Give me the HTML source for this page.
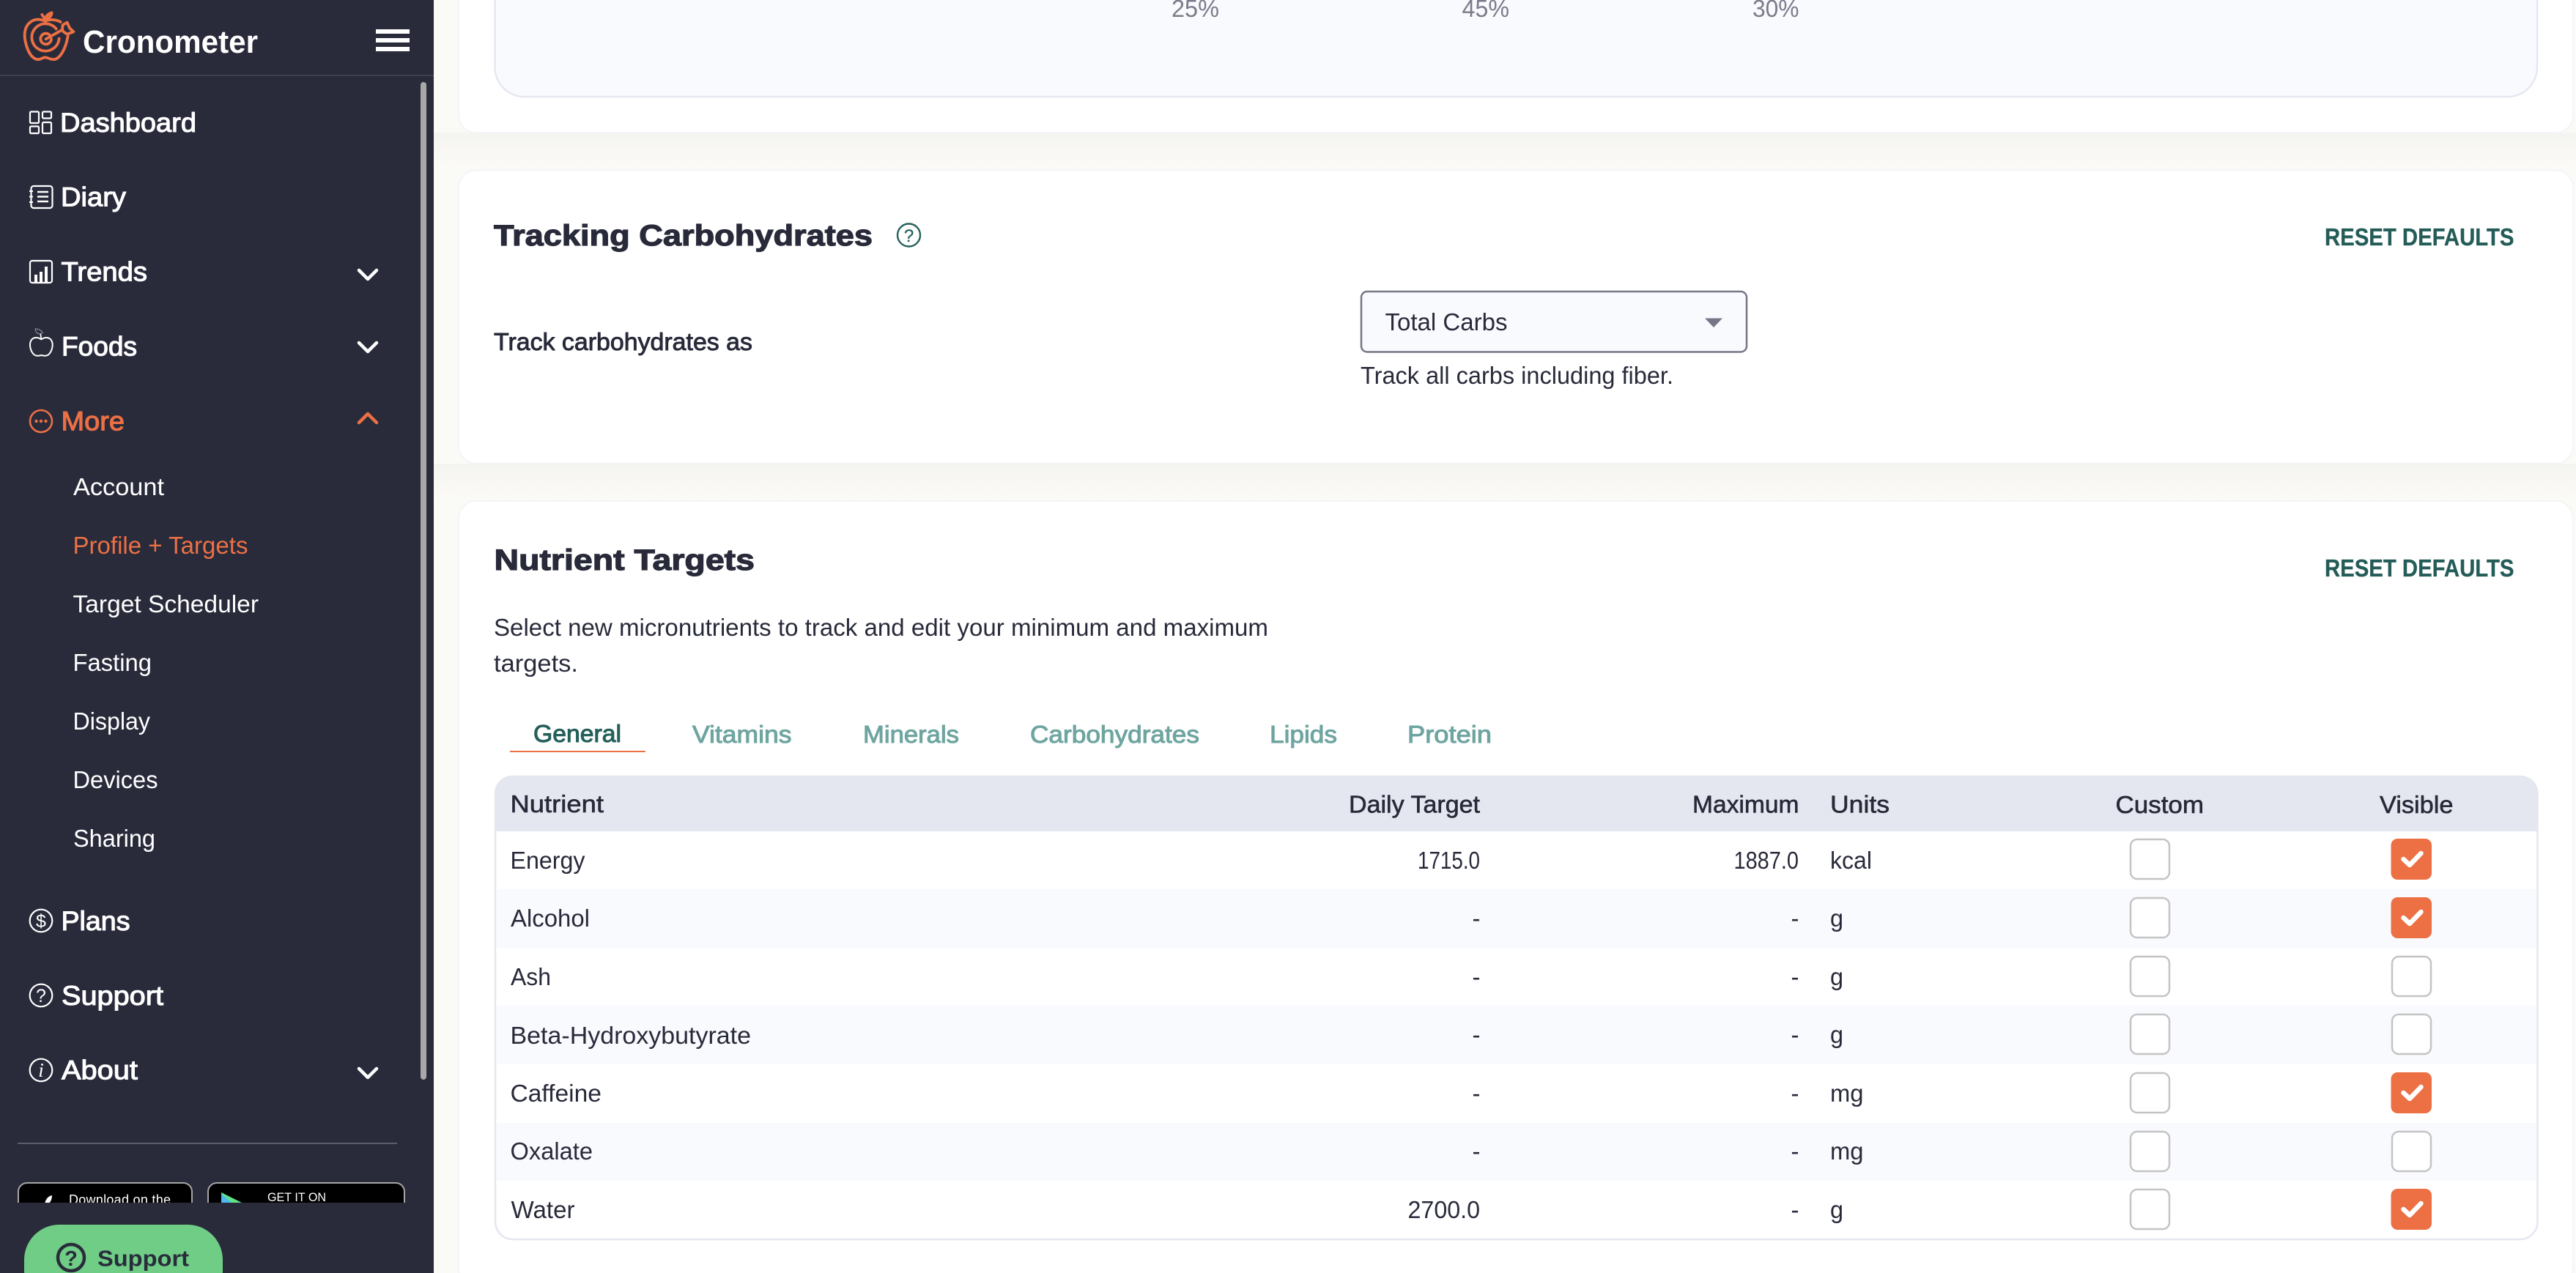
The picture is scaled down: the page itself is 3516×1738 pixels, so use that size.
<!DOCTYPE html>
<html lang="en"><head><meta charset="utf-8"><title>Cronometer - Profile + Targets</title>
<style>
html,body{margin:0;padding:0;background:#fafaf6;width:3516px;height:1738px;overflow:hidden}
svg{display:block}
text{font-family:"Liberation Sans",sans-serif;white-space:pre}
.nav{font-size:37px;fill:#fff;stroke:#fff;stroke-width:1.1}
.sub{font-size:33px;fill:#fff}
.b{font-size:33px;fill:#282a3a}
.m{font-size:33px;fill:#282a3a;stroke:#282a3a;stroke-width:.6}
.h{font-size:40px;font-weight:700;fill:#282a3a;stroke:#282a3a;stroke-width:1.2}
.r{font-size:33px;font-weight:700;fill:#245c58;stroke:#245c58;stroke-width:.3}
.tab{font-size:33px;fill:#6ea5a0;stroke:#6ea5a0;stroke-width:1}
.p{font-size:33px;fill:#7a7c89}
</style></head><body>
<svg xmlns="http://www.w3.org/2000/svg" width="3516" height="1738" viewBox="0 0 3516 1738">
<defs>
<linearGradient id="g" x1="0" y1="0" x2="0" y2="1"><stop offset="0" stop-color="#f4f4f0"/><stop offset=".6" stop-color="#f9f8f4"/><stop offset="1" stop-color="#fafaf6"/></linearGradient>
<clipPath id="tc"><rect x="675" y="1059" width="2789.5" height="634" rx="24"/></clipPath>
<clipPath id="bc"><rect x="0" y="1600" width="592" height="42"/></clipPath>
<g id="chk"><path d="M0 8 L8.5 16 L24 0" fill="none" stroke="#fff" stroke-width="6.5" stroke-linecap="round" stroke-linejoin="round"/></g>
</defs>

<!-- main background -->
<rect width="3516" height="1738" fill="#fafaf6"/>
<rect x="592" y="181" width="2924" height="51" fill="url(#g)"/>
<rect x="592" y="633" width="2924" height="51" fill="url(#g)"/>

<!-- card 1 -->
<rect x="626" y="-60" width="2886" height="241" rx="24" fill="#fff" stroke="#f4f5f8" stroke-width="2"/>
<rect x="675.5" y="-60" width="2787.5" height="192" rx="40" fill="#f9fafe" stroke="#e5e8f0" stroke-width="2.5"/>
<text x="1599" y="23" class="p" textLength="65" lengthAdjust="spacingAndGlyphs">25%</text>
<text x="1995.5" y="23" class="p" textLength="64.5" lengthAdjust="spacingAndGlyphs">45%</text>
<text x="2392" y="23" class="p" textLength="63.5" lengthAdjust="spacingAndGlyphs">30%</text>

<!-- card 2 -->
<rect x="626" y="232.5" width="2886" height="400" rx="24" fill="#fff" stroke="#f4f5f8" stroke-width="2"/>
<text x="674" y="335" class="h" textLength="517" lengthAdjust="spacingAndGlyphs">Tracking Carbohydrates</text>
<ellipse cx="1240.5" cy="321" rx="15.5" ry="15.5" fill="none" stroke="#24605a" stroke-width="2.4"/>
<text x="1240.5" y="330" font-size="24" text-anchor="middle" fill="#24605a" stroke="#24605a" stroke-width=".3">?</text>
<text x="3173" y="335" class="r" textLength="258.5" lengthAdjust="spacingAndGlyphs">RESET DEFAULTS</text>
<text x="674" y="478" class="m" textLength="353" lengthAdjust="spacingAndGlyphs" style="stroke-width:.9">Track carbohydrates as</text>
<rect x="1858" y="398" width="526" height="82.5" rx="8" fill="#f9fafe" stroke="#757785" stroke-width="2.5"/>
<text x="1890.5" y="451" class="b" textLength="167" lengthAdjust="spacingAndGlyphs">Total Carbs</text>
<path d="M2327 434.5H2351L2339 447Z" fill="#757785"/>
<text x="1857" y="524" class="b" textLength="427" lengthAdjust="spacingAndGlyphs">Track all carbs including fiber.</text>

<!-- card 3 -->
<rect x="626" y="684" width="2886" height="1071" rx="24" fill="#fff" stroke="#f4f5f8" stroke-width="2"/>
<text x="674.5" y="778" class="h" textLength="355.5" lengthAdjust="spacingAndGlyphs">Nutrient Targets</text>
<text x="3173" y="787" class="r" textLength="258.5" lengthAdjust="spacingAndGlyphs">RESET DEFAULTS</text>
<text x="674" y="868" class="b" textLength="1057" lengthAdjust="spacingAndGlyphs">Select new micronutrients to track and edit your minimum and maximum</text>
<text x="674" y="917" class="b" textLength="115" lengthAdjust="spacingAndGlyphs">targets.</text>

<text x="728" y="1013" class="tab" textLength="120" lengthAdjust="spacingAndGlyphs" style="fill:#24605a;stroke:#24605a">General</text>
<rect x="696" y="1025" width="185" height="2" fill="#ec7044"/>
<text x="945" y="1014" class="tab" textLength="135.5" lengthAdjust="spacingAndGlyphs">Vitamins</text>
<text x="1178" y="1014" class="tab" textLength="131" lengthAdjust="spacingAndGlyphs">Minerals</text>
<text x="1406" y="1014" class="tab" textLength="231" lengthAdjust="spacingAndGlyphs">Carbohydrates</text>
<text x="1733" y="1014" class="tab" textLength="92" lengthAdjust="spacingAndGlyphs">Lipids</text>
<text x="1921" y="1014" class="tab" textLength="115" lengthAdjust="spacingAndGlyphs">Protein</text>

<!-- table -->
<g clip-path="url(#tc)">
<rect x="675" y="1059" width="2790" height="634" fill="#fff"/>
<rect x="675" y="1059" width="2790" height="76" fill="#e4e7ef"/>
<rect x="675" y="1214" width="2790" height="80" fill="#f9fafe"/>
<rect x="675" y="1373" width="2790" height="80" fill="#f9fafe"/>
<rect x="675" y="1533" width="2790" height="79" fill="#f9fafe"/>
</g>
<rect x="676" y="1060" width="2787.5" height="632" rx="24" fill="none" stroke="#e4e7ef" stroke-width="2.5"/>

<text x="696.5" y="1109" class="m" textLength="127.5" lengthAdjust="spacingAndGlyphs">Nutrient</text>
<text x="1841" y="1109.5" class="m" textLength="179" lengthAdjust="spacingAndGlyphs">Daily Target</text>
<text x="2310" y="1109.5" class="m" textLength="145.5" lengthAdjust="spacingAndGlyphs">Maximum</text>
<text x="2498" y="1109.5" class="m" textLength="81" lengthAdjust="spacingAndGlyphs">Units</text>
<text x="2887.5" y="1110" class="m" textLength="120.5" lengthAdjust="spacingAndGlyphs">Custom</text>
<text x="3248" y="1110" class="m" textLength="100.5" lengthAdjust="spacingAndGlyphs">Visible</text>

<text x="696.5" y="1186" class="b" textLength="102" lengthAdjust="spacingAndGlyphs">Energy</text>
<text x="697" y="1265" class="b" textLength="108" lengthAdjust="spacingAndGlyphs">Alcohol</text>
<text x="697" y="1345" class="b" textLength="55" lengthAdjust="spacingAndGlyphs">Ash</text>
<text x="696.5" y="1425" class="b" textLength="328.5" lengthAdjust="spacingAndGlyphs">Beta-Hydroxybutyrate</text>
<text x="696.5" y="1504" class="b" textLength="124.5" lengthAdjust="spacingAndGlyphs">Caffeine</text>
<text x="696.5" y="1583" class="b" textLength="112.5" lengthAdjust="spacingAndGlyphs">Oxalate</text>
<text x="697.5" y="1663" class="b" textLength="87" lengthAdjust="spacingAndGlyphs">Water</text>

<text x="1935" y="1186" class="b" textLength="85" lengthAdjust="spacingAndGlyphs">1715.0</text>
<text x="2366.5" y="1186" class="b" textLength="88.5" lengthAdjust="spacingAndGlyphs">1887.0</text>
<text x="2498" y="1186" class="b" textLength="57" lengthAdjust="spacingAndGlyphs">kcal</text>
<text x="2020.5" y="1265" class="b" text-anchor="end">-</text><text x="2455.5" y="1265" class="b" text-anchor="end">-</text><text x="2498" y="1265" class="b" textLength="18" lengthAdjust="spacingAndGlyphs">g</text>
<text x="2020.5" y="1345" class="b" text-anchor="end">-</text><text x="2455.5" y="1345" class="b" text-anchor="end">-</text><text x="2498" y="1345" class="b" textLength="18" lengthAdjust="spacingAndGlyphs">g</text>
<text x="2020.5" y="1424" class="b" text-anchor="end">-</text><text x="2455.5" y="1424" class="b" text-anchor="end">-</text><text x="2498" y="1424" class="b" textLength="18" lengthAdjust="spacingAndGlyphs">g</text>
<text x="2020.5" y="1504" class="b" text-anchor="end">-</text><text x="2455.5" y="1504" class="b" text-anchor="end">-</text><text x="2498" y="1504" class="b" textLength="45.5" lengthAdjust="spacingAndGlyphs">mg</text>
<text x="2020.5" y="1583" class="b" text-anchor="end">-</text><text x="2455.5" y="1583" class="b" text-anchor="end">-</text><text x="2498" y="1583" class="b" textLength="45.5" lengthAdjust="spacingAndGlyphs">mg</text>
<text x="1921.5" y="1663" class="b" textLength="98.5" lengthAdjust="spacingAndGlyphs">2700.0</text>
<text x="2455.5" y="1663" class="b" text-anchor="end">-</text><text x="2498" y="1663" class="b" textLength="18" lengthAdjust="spacingAndGlyphs">g</text>

<!-- checkboxes -->
<g fill="#fff" stroke="#c4c4c4" stroke-width="2.5">
<rect x="2908" y="1146" width="53" height="54" rx="9"/>
<rect x="2908" y="1226" width="53" height="54" rx="9"/>
<rect x="2908" y="1306" width="53" height="54" rx="9"/>
<rect x="2908" y="1385" width="53" height="54" rx="9"/>
<rect x="2908" y="1465" width="53" height="54" rx="9"/>
<rect x="2908" y="1545" width="53" height="54" rx="9"/>
<rect x="2908" y="1624" width="53" height="54" rx="9"/>
<rect x="3265" y="1306" width="53" height="54" rx="9"/>
<rect x="3265" y="1385" width="53" height="54" rx="9"/>
<rect x="3265" y="1545" width="53" height="54" rx="9"/>
</g>
<g fill="#ec7044">
<rect x="3263.5" y="1145" width="55.5" height="56" rx="9"/>
<rect x="3263.5" y="1225" width="55.5" height="56" rx="9"/>
<rect x="3263.5" y="1464" width="55.5" height="56" rx="9"/>
<rect x="3263.5" y="1623" width="55.5" height="56" rx="9"/>
</g>
<use href="#chk" x="3280.5" y="1165"/>
<use href="#chk" x="3280.5" y="1245"/>
<use href="#chk" x="3280.5" y="1484"/>
<use href="#chk" x="3280.5" y="1643"/>

<!-- sidebar -->
<rect x="0" y="0" width="592" height="1738" fill="#292b3b"/>
<rect x="0" y="102" width="592" height="2" fill="#3e404f"/>
<rect x="574" y="112" width="8" height="1362" rx="4" fill="#a8a8a8"/>

<!-- logo -->
<g transform="translate(20 10) scale(.3333)" fill="none" stroke="#ec7044" stroke-width="11.5" stroke-linecap="round" stroke-linejoin="round">
<path d="M188 60C170 50 145 48 125 56C105 48 85 46 68 58C45 72 38 100 42 130C48 165 62 205 90 213C105 216 115 205 125 205C135 205 148 216 165 213C190 205 210 165 218 118"/>
<path d="M170 88A56 56 0 1 0 182 128"/>
<path d="M142 112A22 22 0 1 0 150 130"/>
<path d="M128 130L195 92"/>
<path d="M195 92L197 72L215 62L225 85L241 100L215 110L201 101Z"/>
<path d="M125 50L112 30M125 50C128 34 138 26 152 22C150 36 142 46 125 50Z"/>
</g>
<text x="113" y="72" font-size="44" font-weight="700" fill="#fff" textLength="239" lengthAdjust="spacingAndGlyphs">Cronometer</text>
<g fill="#fff"><rect x="513" y="40" width="46" height="6"/><rect x="513" y="52" width="46" height="6"/><rect x="513" y="64" width="46" height="6"/></g>

<!-- nav icons -->
<g fill="none" stroke="#fff" stroke-width="2.2" stroke-linejoin="round">
<rect x="41" y="152.5" width="12" height="15.5" rx="1.5"/><rect x="58" y="152.5" width="12" height="9" rx="1.5"/><rect x="41" y="172.5" width="12" height="9.5" rx="1.5"/><rect x="58" y="167" width="12" height="15" rx="1.5"/>
<rect x="42.5" y="254" width="29" height="30" rx="3.5"/>
<path d="M51 262H66M51 268.5H66M51 275H66" stroke-width="2.6"/>
<path d="M40 261H45M40 268.5H45M40 276H45" stroke-width="2"/>
<rect x="41" y="356" width="30" height="30" rx="3"/>
<circle cx="56" cy="1257" r="15.3"/><circle cx="56" cy="1359" r="15.3"/><circle cx="56" cy="1461" r="15.3"/>
</g>
<g fill="#fff"><rect x="47" y="375" width="4" height="11"/><rect x="54" y="371" width="4" height="15"/><rect x="61" y="364" width="4" height="22"/></g>
<g transform="translate(30 440) scale(.3333)" fill="none" stroke="#fff" stroke-width="6">
<path d="M79 70C65 60 45 60 37 75C28 92 35 120 50 133C60 140 70 137 79 135C88 137 98 140 108 133C123 120 130 92 121 75C113 60 93 60 79 70Z"/>
<path d="M79 70L76 48" stroke-width="5"/>
<path d="M76 48C62 48 54 38 55 27C68 27 80 34 84 42Z" stroke="#b9b9c0" stroke-width="4" stroke-dasharray="5 3"/>
</g>
<g fill="#ec7044"><circle cx="49.5" cy="575" r="2.2"/><circle cx="56" cy="575" r="2.2"/><circle cx="62.5" cy="575" r="2.2"/></g>
<circle cx="56" cy="575" r="15" fill="none" stroke="#ec7044" stroke-width="2.6"/>
<text x="56" y="1266" font-size="25" text-anchor="middle" fill="#fff">$</text>
<text x="56" y="1368" font-size="25" text-anchor="middle" fill="#fff">?</text>
<text x="56" y="1470" font-size="27" font-style="italic" text-anchor="middle" fill="#fff" style="font-family:'Liberation Serif',serif">i</text>

<!-- nav text -->
<text x="82" y="180" class="nav" textLength="186" lengthAdjust="spacingAndGlyphs">Dashboard</text>
<text x="83" y="281.5" class="nav" textLength="89" lengthAdjust="spacingAndGlyphs">Diary</text>
<text x="83.5" y="383.5" class="nav" textLength="117.5" lengthAdjust="spacingAndGlyphs">Trends</text>
<text x="84" y="485.5" class="nav" textLength="103" lengthAdjust="spacingAndGlyphs">Foods</text>
<text x="83.5" y="587.5" class="nav" textLength="86.5" lengthAdjust="spacingAndGlyphs" style="fill:#ec7044;stroke:#ec7044">More</text>
<text x="83.5" y="1270" class="nav" textLength="94" lengthAdjust="spacingAndGlyphs">Plans</text>
<text x="84" y="1372" class="nav" textLength="139" lengthAdjust="spacingAndGlyphs">Support</text>
<text x="84" y="1473.5" class="nav" textLength="104" lengthAdjust="spacingAndGlyphs">About</text>

<!-- chevrons -->
<g fill="none" stroke="#fff" stroke-width="4.5" stroke-linecap="round" stroke-linejoin="round">
<path d="M490 369L502 381L514 369"/>
<path d="M490 468L502 480L514 468"/>
<path d="M490 1459L502 1471L514 1459"/>
<path d="M490 577L502 565L514 577" stroke="#ec7044"/>
</g>

<!-- sub nav -->
<text x="100" y="676" class="sub" textLength="124" lengthAdjust="spacingAndGlyphs">Account</text>
<text x="99.5" y="756" class="sub" textLength="239" lengthAdjust="spacingAndGlyphs" style="fill:#ec7044">Profile + Targets</text>
<text x="99.5" y="836" class="sub" textLength="253.5" lengthAdjust="spacingAndGlyphs">Target Scheduler</text>
<text x="99.5" y="916" class="sub" textLength="107.5" lengthAdjust="spacingAndGlyphs">Fasting</text>
<text x="99.5" y="996" class="sub" textLength="105.5" lengthAdjust="spacingAndGlyphs">Display</text>
<text x="99.5" y="1076" class="sub" textLength="116" lengthAdjust="spacingAndGlyphs">Devices</text>
<text x="100" y="1156" class="sub" textLength="112" lengthAdjust="spacingAndGlyphs">Sharing</text>

<rect x="24" y="1560" width="518" height="2" fill="#5d5e6a"/>

<!-- store badges (clipped) -->
<g clip-path="url(#bc)">
<rect x="25" y="1615" width="237" height="60" rx="12" fill="#000" stroke="#a6a6a6" stroke-width="2"/>
<rect x="284" y="1615" width="268" height="60" rx="12" fill="#000" stroke="#a6a6a6" stroke-width="2"/>
<path d="M61 1644C62 1637 66 1633 71 1632C71 1638 68 1643 65 1644Z" fill="#fff"/>
<text x="94" y="1644" font-size="18" fill="#fff" textLength="139" lengthAdjust="spacing">Download on the</text>
<path d="M302 1628L330 1642H302Z" fill="#5fe38a"/>
<path d="M302 1630V1644H318Z" fill="#4db8f0"/>
<text x="365" y="1640" font-size="17" fill="#fff" textLength="80" lengthAdjust="spacingAndGlyphs">GET IT ON</text>
</g>

<!-- support button -->
<rect x="33" y="1672" width="271" height="110" rx="48" fill="#6fcd86"/>
<circle cx="97" cy="1717" r="18" fill="none" stroke="#292b3b" stroke-width="4.5"/>
<text x="97" y="1728" font-size="29" font-weight="700" text-anchor="middle" fill="#292b3b">?</text>
<text x="133" y="1728.5" font-size="31" font-weight="700" fill="#292b3b" textLength="125" lengthAdjust="spacingAndGlyphs">Support</text>
</svg>
</body></html>
